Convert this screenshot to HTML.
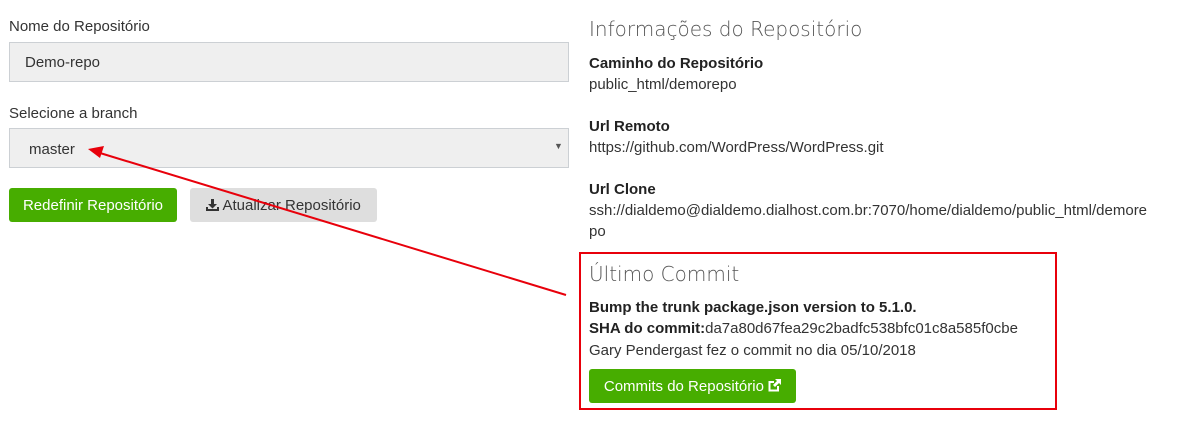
<html><head><style>
body{margin:0;width:1184px;height:446px;background:#fff;font-family:"Liberation Sans",sans-serif;color:#333;font-size:15px;position:relative;overflow:hidden}
.a{position:absolute;white-space:nowrap}
.inp{position:absolute;left:9px;width:558px;height:38px;background:#efefef;border:1px solid #ccd0d4;}
.h{color:#555;font-family:"DejaVu Sans","Liberation Sans",sans-serif;font-weight:200}
.btn{position:absolute;height:34px;line-height:36px;border-radius:3px;font-size:15px;text-align:center}
b{color:#222}
</style></head><body>
<div class="a" style="left:9px;top:18px">Nome do Repositório</div>
<div class="inp" style="top:42px"><span class="a" style="left:15px;top:11px">Demo-repo</span></div>
<div class="a" style="left:9px;top:105px">Selecione a branch</div>
<div class="inp" style="top:128px"><span class="a" style="left:19px;top:12px">master</span><span class="a" style="left:544px;top:12px;font-size:9px;color:#555">▼</span></div>
<div class="btn" style="left:9px;top:188px;width:168px;background:#47ad00;color:#fff">Redefinir Repositório</div>
<div class="btn" style="left:190px;top:188px;width:187px;background:#dedede;color:#333"><svg width="13" height="12" viewBox="0 0 13 12" style="vertical-align:-1px"><path d="M5 0h3v5h3l-4.5 4.5L2 5h3z M0 8h2v2h9V8h2v4H0z" fill="#333"/></svg> Atualizar Repositório</div>

<div class="a h" style="left:589px;top:17px;font-size:20px">Informações do Repositório</div>
<div class="a" style="left:589px;top:55px"><b>Caminho do Repositório</b></div>
<div class="a" style="left:589px;top:76px">public_html/demorepo</div>
<div class="a" style="left:589px;top:118px"><b>Url Remoto</b></div>
<div class="a" style="left:589px;top:139px">https://github.com/WordPress/WordPress.git</div>
<div class="a" style="left:589px;top:181px"><b>Url Clone</b></div>
<div class="a" style="left:589px;top:202px">ssh://dialdemo@dialdemo.dialhost.com.br:7070/home/dialdemo/public_html/demore</div>
<div class="a" style="left:589px;top:223px">po</div>
<div class="a h" style="left:589px;top:262px;font-size:20px">Último Commit</div>
<div class="a" style="left:589px;top:299px"><b>Bump the trunk package.json version to 5.1.0.</b></div>
<div class="a" style="left:589px;top:320px"><b>SHA do commit:</b>da7a80d67fea29c2badfc538bfc01c8a585f0cbe</div>
<div class="a" style="left:589px;top:342px">Gary Pendergast fez o commit no dia 05/10/2018</div>
<div class="btn" style="left:589px;top:369px;width:207px;background:#47ad00;color:#fff">Commits do Repositório <svg width="13" height="13" viewBox="0 0 13 13" style="vertical-align:-1px"><path d="M10 7v4.5H1.5V3H6" stroke="#fff" stroke-width="2" fill="none"/><path d="M7 0h6v6l-2-2-4 4-2-2 4-4z" fill="#fff"/></svg></div>
<div style="position:absolute;left:579px;top:252px;width:474px;height:154px;border:2px solid #e8000b"></div>
<svg style="position:absolute;left:0;top:0" width="1184" height="446"><line x1="566" y1="295" x2="100" y2="153" stroke="#e8000b" stroke-width="2"/><path d="M88 149L104 146L100 158z" fill="#e8000b"/></svg>
</body></html>
